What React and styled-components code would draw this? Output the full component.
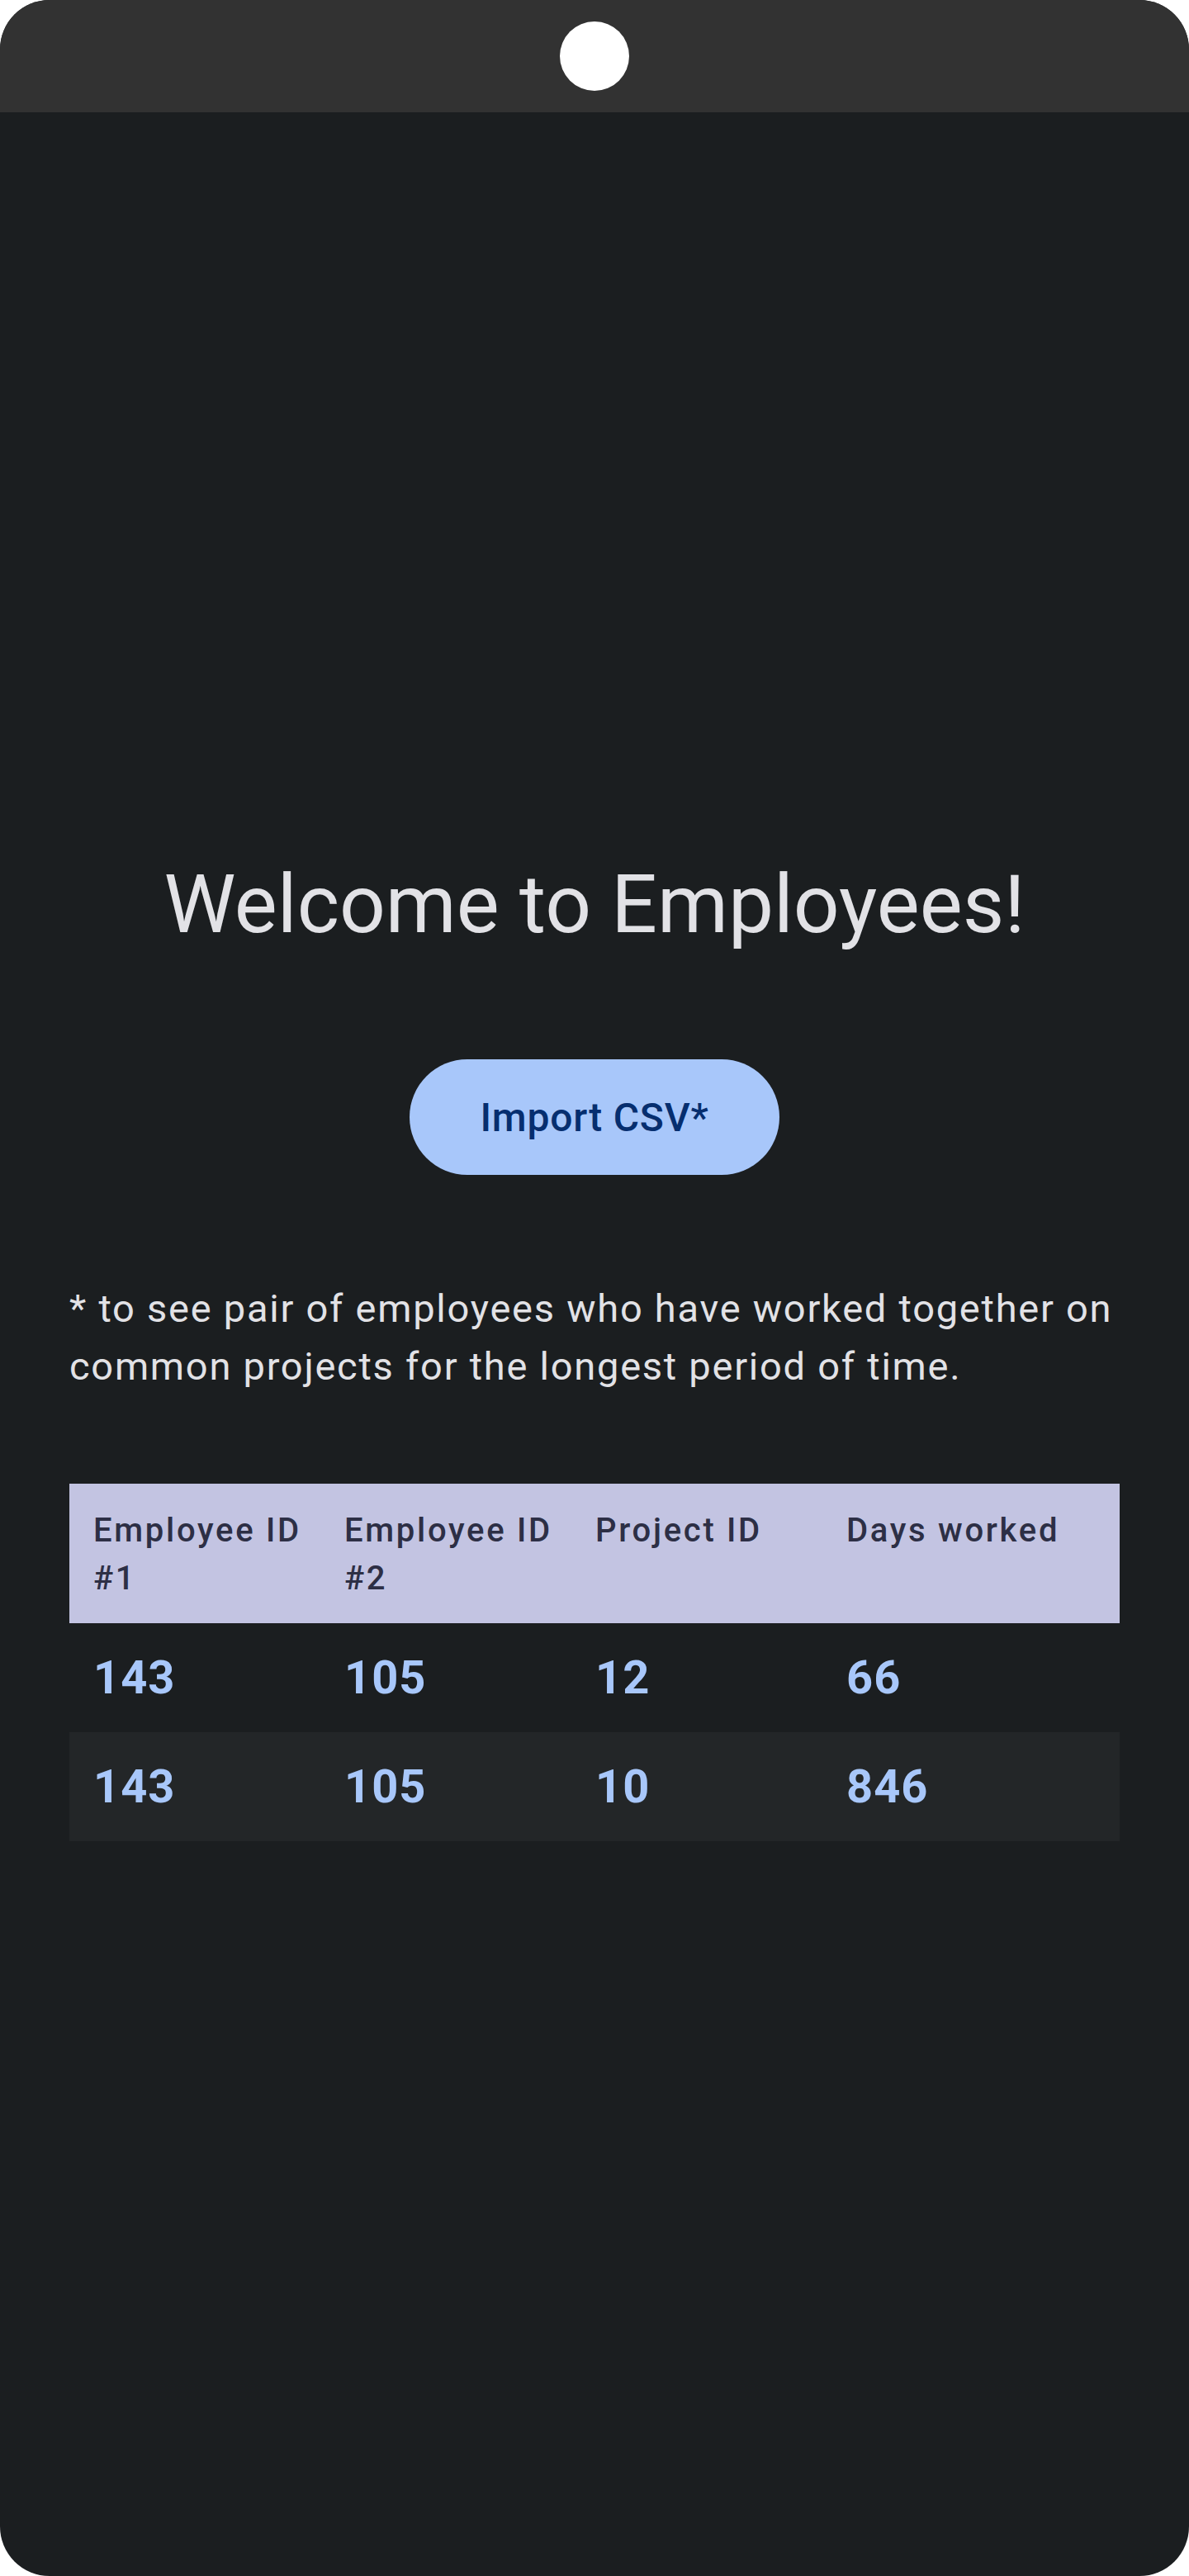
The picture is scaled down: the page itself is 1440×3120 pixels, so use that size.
import React from 'react';
import styled, {createGlobalStyle} from "styled-components";

const GlobalStyle = createGlobalStyle`
  body {
    margin: 0;
    background: #ffffff;
    font-family: Roboto, "Liberation Sans", sans-serif;
  }
`;

const Device = styled.div`
  width: 1440px;
  height: 3120px;
  border-radius: 60px;
  overflow: hidden;
  background: #1b1e20;
  display: flex;
  flex-direction: column;
`;

const StatusBar = styled.div`
  height: 136px;
  flex-shrink: 0;
  background: #323232;
  display: flex;
  justify-content: center;
  align-items: center;
`;

const Camera = styled.div`
  width: 84px;
  height: 84px;
  border-radius: 50%;
  background: #ffffff;
`;

const Content = styled.main`
  display: flex;
  flex-direction: column;
  align-items: center;
  padding: 901px 84px 0;
`;

const Title = styled.h1`
  margin: 0;
  font-size: 98px;
  line-height: 118px;
  font-weight: 400;
  color: #e2e2e6;
  text-align: center;
`;

const ImportButton = styled.button`
  margin-top: 128px;
  width: 448px;
  height: 140px;
  border: none;
  border-radius: 70px;
  background: #a8c7fa;
  color: #062e6f;
  font-family: Roboto, "Liberation Sans", sans-serif;
  font-size: 48px;
  font-weight: 500;
  letter-spacing: 0.8px;
  cursor: pointer;
`;

const Note = styled.p`
  align-self: stretch;
  margin: 127px 0 0;
  font-size: 47px;
  line-height: 70px;
  letter-spacing: 1.75px;
  color: #e2e2e6;
`;

const Table = styled.div`
  align-self: stretch;
  margin-top: 107px;
  display: flex;
  flex-direction: column;
`;

const HeaderRow = styled.div`
  display: grid;
  grid-template-columns: repeat(4, 304px);
  height: 169px;
  box-sizing: border-box;
  padding-top: 28px;
  background: #c3c4e2;
`;

const HeaderCell = styled.div`
  padding: 0 8px 0 29px;
  font-size: 40px;
  line-height: 58px;
  font-weight: 500;
  letter-spacing: 2.7px;
  color: #2d2f45;
`;

const Row = styled.div`
  display: grid;
  grid-template-columns: repeat(4, 304px);
  align-items: center;
  height: 132px;
  background: ${({$striped}) => $striped ? "#232628" : "transparent"};
`;

const Cell = styled.div`
  padding: 0 29px;
  font-size: 56px;
  line-height: 66px;
  font-weight: 700;
  letter-spacing: 1px;
  color: #a8c7fa;
`;

const headers = ["Employee ID #1", "Employee ID #2", "Project ID", "Days worked"];

const rows = [
    ["143", "105", "12", "66"],
    ["143", "105", "10", "846"],
];

const App = () => {
    return (
        <>
            <GlobalStyle/>
            <Device>
                <StatusBar>
                    <Camera/>
                </StatusBar>
                <Content>
                    <Title>Welcome to Employees!</Title>
                    <ImportButton>Import CSV*</ImportButton>
                    <Note>
                        * to see pair of employees who have worked together on common projects for the
                        longest period of time.
                    </Note>
                    <Table>
                        <HeaderRow>
                            {headers.map(h => <HeaderCell key={h}>{h}</HeaderCell>)}
                        </HeaderRow>
                        {rows.map((row, i) => (
                            <Row key={i} $striped={i % 2 === 1}>
                                {row.map((value, j) => <Cell key={j}>{value}</Cell>)}
                            </Row>
                        ))}
                    </Table>
                </Content>
            </Device>
        </>
    );
};

export default App;
